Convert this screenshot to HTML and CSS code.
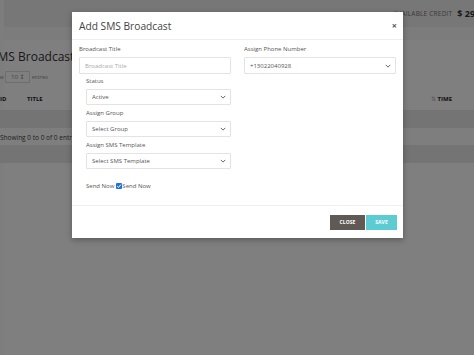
FILE: index.html
```html
<!DOCTYPE html>
<html>
<head>
<meta charset="utf-8">
<link rel="stylesheet" href="styles.css">
</head>
<body>
<div class="page">
  <div class="topbar">
    <span class="credit-label">AVAILABLE CREDIT</span>
    <span class="credit-value">$ 29.80</span>
  </div>
  <div class="subbar"></div>
  <main class="main">
    <h1 class="page-title">SMS Broadcast</h1>
    <div class="show">Show <span class="len">10 &#8597;</span> entries</div>
    <div class="thead">
      <span class="th th-id">ID</span>
      <span class="th th-title">TITLE</span>
      <span class="th th-time"><span class="sort">&#8645;</span> TIME</span>
    </div>
    <div class="trow dark"></div>
    <div class="trow info">Showing 0 to 0 of 0 entries</div>
    <div class="trow dark"></div>
  </main>
</div>

<div class="overlay"></div>

<div class="modal">
  <div class="modal-header">
    <span class="modal-title">Add SMS Broadcast</span>
    <span class="modal-close">&times;</span>
  </div>
  <div class="modal-body">
    <div class="cols">
      <div class="col">
        <div class="group">
          <label class="lbl">Broadcast Title</label>
          <div class="ctl input placeholder">Broadcast Title</div>
        </div>
        <div class="indent">
          <div class="group">
            <label class="lbl">Status</label>
            <div class="ctl select">Active<svg class="chev" viewBox="0 0 8 5" width="6" height="4"><path d="M1 1 L4 4 L7 1" fill="none" stroke="#555" stroke-width="1.2"/></svg></div>
          </div>
          <div class="group">
            <label class="lbl">Assign Group</label>
            <div class="ctl select">Select Group<svg class="chev" viewBox="0 0 8 5" width="6" height="4"><path d="M1 1 L4 4 L7 1" fill="none" stroke="#555" stroke-width="1.2"/></svg></div>
          </div>
          <div class="group">
            <label class="lbl">Assign SMS Template</label>
            <div class="ctl select">Select SMS Template<svg class="chev" viewBox="0 0 8 5" width="6" height="4"><path d="M1 1 L4 4 L7 1" fill="none" stroke="#555" stroke-width="1.2"/></svg></div>
          </div>
          <div class="sendnow">Send Now <span class="check"><svg viewBox="0 0 6 6" width="6" height="6"><path d="M1.2 3.1 L2.5 4.4 L4.9 1.6" fill="none" stroke="#fff" stroke-width="1"/></svg></span>Send Now</div>
        </div>
      </div>
      <div class="col">
        <div class="group">
          <label class="lbl">Assign Phone Number</label>
          <div class="ctl select">+13022040928<svg class="chev" viewBox="0 0 8 5" width="6" height="4"><path d="M1 1 L4 4 L7 1" fill="none" stroke="#555" stroke-width="1.2"/></svg></div>
        </div>
      </div>
    </div>
  </div>
  <div class="modal-footer">
    <button class="btn btn-close">CLOSE</button>
    <button class="btn btn-save">SAVE</button>
  </div>
</div>
</body>
</html>
```

FILE: styles.css
```css
* { box-sizing: border-box; }
html, body { margin: 0; padding: 0; }
body {
  width: 474px;
  height: 355px;
  overflow: hidden;
  background: #ffffff;
  font-family: "Open Sans", "DejaVu Sans", sans-serif;
  color: #555;
  position: relative;
}
.page {
  border-left: 4px solid #fafafa;
  height: 355px;
}
.topbar {
  height: 27px;
  background: #eeeeee;
  display: flex;
  justify-content: flex-end;
  align-items: center;
  gap: 5px;
  margin-right: -14px;
}
.credit-label { font-size: 6.5px; color: #777; letter-spacing: 0.2px; }
.credit-value { font-size: 9px; font-weight: 700; color: #333; }
.subbar { height: 13px; background: #f9f9f9; }
.main { margin-left: -13px; }
.page-title {
  margin: 8px 0 0 0;
  font-size: 12px;
  font-weight: 400;
  color: #333;
  height: 18px;
  line-height: 18px;
}
.show { font-size: 5px; color: #888; margin-top: 5px; height: 10px; line-height: 10px; }
.len { display: inline-block; border: 1px solid #ddd; padding: 0 5px; font-size: 6px; }
.thead {
  margin-top: 7px;
  height: 22px;
  display: flex;
  align-items: center;
  font-size: 6px;
  font-weight: 700;
  color: #222;
}
.th-id { margin-left: 9px; width: 27px; }
.th-time { margin-left: auto; margin-right: 22px; }
.sort { color: #aaa; font-weight: 400; }
.trow { height: 17px; }
.trow.dark { background: #e9e9e9; height: 18px; }
.trow.info { font-size: 6.5px; color: #444; line-height: 19px; padding-left: 9px; background: #fcfcfc; }

.overlay {
  position: absolute;
  inset: 0;
  background: rgba(0,0,0,0.5);
}
.modal {
  position: absolute;
  left: 72px;
  top: 12px;
  width: 331px;
  height: 226px;
  background: #fff;
  display: flex;
  flex-direction: column;
  box-shadow: 0 2px 6px rgba(0,0,0,0.3);
}
.modal-header {
  height: 28px;
  border-bottom: 1px solid #eeeeee;
  display: flex;
  align-items: center;
  justify-content: space-between;
  padding: 0 7px;
}
.modal-title { font-size: 10.2px; color: #444; font-weight: 400; }
.modal-close { font-size: 9px; font-weight: 700; color: #555; margin-right: -1px; }
.modal-body { padding: 5px 7px 0 7px; flex: 1; }
.cols { display: grid; grid-template-columns: 152px 152px; column-gap: 13px; }
.indent { padding-left: 7px; }
.group { display: flex; flex-direction: column; gap: 3px; margin-bottom: 4px; }
.lbl { font-size: 6px; color: #555; height: 9px; line-height: 9px; }
.ctl {
  height: 16px;
  border: 1px solid #e3e3e3;
  border-radius: 1px;
  font-size: 6px;
  color: #555;
  display: flex;
  align-items: center;
  padding: 0 5px;
}
.col > .group:first-child { margin-bottom: 3px; }
.col > .group:first-child .ctl { height: 17px; }
.placeholder { color: #aaa; }
.select { justify-content: space-between; padding-right: 4px; }
.chev { display: block; }
.sendnow {
  margin-top: 12px;
  font-size: 6px;
  color: #555;
  display: flex;
  align-items: center;
  height: 9px;
}
.check {
  display: inline-flex;
  width: 6px;
  height: 6px;
  background: #1e73d8;
  border-radius: 1px;
  margin: 0 0 0 2px;
}
.modal-footer {
  height: 33px;
  border-top: 1px solid #f0f0f0;
  display: flex;
  align-items: center;
  justify-content: flex-end;
  padding: 0 6px;
  gap: 1px;
}
.btn {
  border: none;
  height: 15px;
  font-family: "Open Sans", sans-serif;
  font-size: 5px;
  font-weight: 700;
  color: #fff;
  padding: 0;
  letter-spacing: 0.1px;
}
.btn-close { width: 35px; background: #5f5a55; }
.btn-save { width: 31px; background: #5ccbd2; }
```
